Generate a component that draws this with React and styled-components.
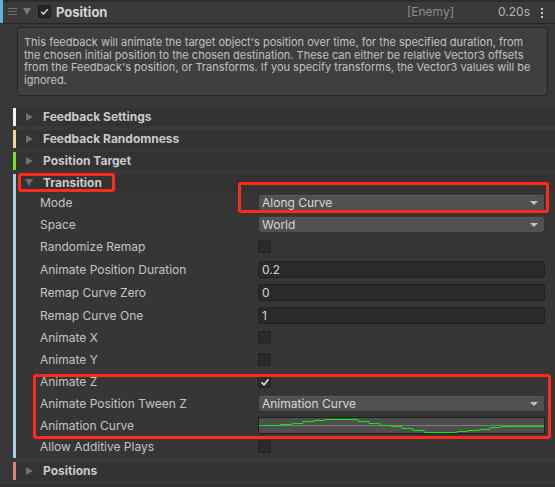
import React from "react";
import styled, { createGlobalStyle } from "styled-components";

const GlobalStyle = createGlobalStyle`
  html, body {
    margin: 0;
    padding: 0;
    background: #383838;
  }
  body {
    font-family: Inter, "Noto Sans", "Liberation Sans", sans-serif;
  }
`;

const Panel = styled.div`
  position: relative;
  width: 555px;
  height: 487px;
  overflow: hidden;
  background: #383838;
  color: #c4c4c4;
  font-size: 12px;
`;

const TopBar = styled.div`
  display: flex;
  align-items: center;
  height: 23px;
  background: #3a3a3a;
  border-bottom: 1px solid #262626;
  box-shadow: inset 0 2px 0 #2c2c2c;
  padding-right: 12px;
`;

const Stripe = styled.div`
  align-self: stretch;
  width: 3px;
  flex: none;
  background: ${(p) => p.color};
`;

const Hamburger = styled.div`
  margin-left: 5px;
  width: 9px;
  height: 7px;
  display: flex;
  flex-direction: column;
  justify-content: space-between;
  span {
    display: block;
    height: 1px;
    background: #6e6e6e;
  }
`;

const Arrow = styled.div`
  flex: none;
  width: 0;
  height: 0;
  margin-left: ${(p) => p.gap}px;
  ${(p) =>
    p.open
      ? `border-left: 4px solid transparent;
         border-right: 4px solid transparent;
         border-top: 7px solid ${p.color || "#6f6f6f"};`
      : `border-top: 4px solid transparent;
         border-bottom: 4px solid transparent;
         border-left: 7px solid ${p.color || "#6f6f6f"};`}
`;

const TitleCheck = styled.div`
  margin-left: 7px;
  width: 11px;
  height: 11px;
  border: 1px solid #191919;
  border-radius: 2px;
  background: #262626;
  display: flex;
  align-items: center;
  justify-content: center;
`;

const Title = styled.div`
  margin-left: 5px;
  font-weight: 700;
  font-size: 13px;
  color: #d4d4d4;
  flex: 1;
`;

const Target = styled.div`
  color: #8c8c8c;
  margin-right: 44px;
`;

const Duration = styled.div`
  color: #b4b4b4;
  margin-right: 11px;
`;

const Kebab = styled.div`
  display: flex;
  flex-direction: column;
  gap: 2px;
  margin-top: 3px;
  span {
    width: 2px;
    height: 2px;
    background: #c4c4c4;
  }
`;

const HelpBox = styled.div`
  margin: 3px 7px 0 17px;
  padding: 8px 6px 8px 6px;
  background: #3f3f3f;
  border: 1px solid #262626;
  border-radius: 3px;
  font-size: 11px;
  line-height: 12.7px;
  color: #c2c2c2;
  span {
    display: block;
    white-space: nowrap;
  }
`;

const Sections = styled.div`
  margin-top: 12px;
  padding-left: 13px;
`;

const SectionHeader = styled.div`
  display: flex;
  align-items: center;
  height: 18px;
  margin-bottom: ${(p) => (p.inGroup ? 0 : 4)}px;
  background: #333333;
`;

const SectionTitle = styled.div`
  margin-left: 10px;
  font-weight: 700;
  font-size: 12px;
  color: #cacaca;
`;

const Group = styled.div`
  border-left: 3px solid ${(p) => p.color};
  margin-bottom: 4px;
  background: #363636;
`;

const Row = styled.div`
  display: flex;
  align-items: center;
  height: ${(p) => p.h || 22}px;
  padding-right: 10px;
`;

const Label = styled.div`
  width: 218px;
  padding-left: 24px;
  flex: none;
  color: #c4c4c4;
`;

const Dropdown = styled.div`
  flex: 1;
  height: 16px;
  box-sizing: border-box;
  display: flex;
  align-items: center;
  justify-content: space-between;
  padding: 0 6px 0 3px;
  background: #515151;
  border: 1px solid #303030;
  border-top-color: #5a5a5a;
  border-radius: 3px;
  color: #d6d6d6;
`;

const DropArrow = styled.div`
  width: 0;
  height: 0;
  border-left: 4px solid transparent;
  border-right: 4px solid transparent;
  border-top: 4px solid #c4c4c4;
`;

const TextField = styled.div`
  flex: 1;
  height: 17px;
  box-sizing: border-box;
  display: flex;
  align-items: center;
  padding-left: 3px;
  background: #2a2a2a;
  border: 1px solid #212121;
  border-radius: 3px;
  color: #d4d4d4;
`;

const Check = styled.div`
  width: 13px;
  height: 13px;
  box-sizing: border-box;
  background: #2b2b2b;
  border: 1px solid #222;
  border-radius: 2px;
  display: flex;
  align-items: center;
  justify-content: center;
`;

const CurveBox = styled.div`
  flex: 1;
  height: 17px;
  box-sizing: border-box;
  background: #4f4f4f;
  border: 1px solid #1e1e1e;
  svg {
    display: block;
  }
`;

const Bottom = styled.div`
  height: 20px;
  background: #313131;
`;

const Annotation = styled.div`
  position: absolute;
  box-sizing: border-box;
  border: 3px solid #ff2a1c;
  border-radius: 3px;
  pointer-events: none;
`;

const Tick = ({ size = 9 }) => (
  <svg width={size} height={size} viewBox="0 0 10 10">
    <path d="M1.5 5.3 L4 7.8 L8.6 2.3" fill="none" stroke="#e6e6e6" strokeWidth="1.5" />
  </svg>
);

const keys = [
  [0, 0],
  [87, 1],
  [132, 0],
  [176, -1],
  [269, 0],
  [285, 0],
];

const curveAt = (x) => {
  for (let i = 0; i < keys.length - 1; i++) {
    const [x0, y0] = keys[i];
    const [x1, y1] = keys[i + 1];
    if (x >= x0 && x <= x1) {
      const t = (x - x0) / (x1 - x0);
      const s = (1 - Math.cos(Math.PI * t)) / 2;
      return y0 + (y1 - y0) * s;
    }
  }
  return 0;
};

const CurvePreview = () => {
  const w = 285;
  const mid = 7.5;
  let d = "";
  const step = 11;
  for (let x = 0; x < w; x += step) {
    const y = Math.round(mid - curveAt(Math.min(x + step / 2, w)) * 7) + 0.5;
    const x2 = Math.min(x + step, w);
    d += (x === 0 ? `M${x} ${y}` : ` L${x} ${y}`) + ` L${x2} ${y}`;
  }
  return (
    <svg width={w} height="15" viewBox={`0 0 ${w} 15`}>
      <line x1="0" y1="7.5" x2={w} y2="7.5" stroke="#7c7c7c" strokeWidth="1" />
      <path d={d} fill="none" stroke="#00f000" strokeWidth="1" />
    </svg>
  );
};

const headers = [
  { title: "Feedback Settings", color: "#f2f2f2" },
  { title: "Feedback Randomness", color: "#f1d58c" },
  { title: "Position Target", color: "#7ce312" },
];

export default function App() {
  return (
    <Panel>
      <GlobalStyle />
      <TopBar>
        <Stripe color="#5eb2da" />
        <Hamburger>
          <span />
          <span />
          <span />
        </Hamburger>
        <Arrow open gap={6} color="#7a7a7a" />
        <TitleCheck>
          <Tick />
        </TitleCheck>
        <Title>Position</Title>
        <Target>[Enemy]</Target>
        <Duration>0.20s</Duration>
        <Kebab>
          <span />
          <span />
          <span />
        </Kebab>
      </TopBar>

      <HelpBox>
        <span>This feedback will animate the target object's position over time, for the specified duration, from</span>
        <span>the chosen initial position to the chosen destination. These can either be relative Vector3 offsets</span>
        <span>from the Feedback's position, or Transforms. If you specify transforms, the Vector3 values will be</span>
        <span>ignored.</span>
      </HelpBox>

      <Sections>
        {headers.map((h) => (
          <SectionHeader key={h.title}>
            <Stripe color={h.color} />
            <Arrow gap={10} />
            <SectionTitle>{h.title}</SectionTitle>
          </SectionHeader>
        ))}

        <Group color="#a6d2e4">
          <SectionHeader inGroup>
            <Arrow open gap={9} />
            <SectionTitle>Transition</SectionTitle>
          </SectionHeader>
          <Row>
            <Label>Mode</Label>
            <Dropdown>
              Along Curve
              <DropArrow />
            </Dropdown>
          </Row>
          <Row>
            <Label>Space</Label>
            <Dropdown>
              World
              <DropArrow />
            </Dropdown>
          </Row>
          <Row>
            <Label>Randomize Remap</Label>
            <Check />
          </Row>
          <Row h={23}>
            <Label>Animate Position Duration</Label>
            <TextField>0.2</TextField>
          </Row>
          <Row h={23}>
            <Label>Remap Curve Zero</Label>
            <TextField>0</TextField>
          </Row>
          <Row h={23}>
            <Label>Remap Curve One</Label>
            <TextField>1</TextField>
          </Row>
          <Row>
            <Label>Animate X</Label>
            <Check />
          </Row>
          <Row>
            <Label>Animate Y</Label>
            <Check />
          </Row>
          <Row>
            <Label>Animate Z</Label>
            <Check>
              <Tick size={10} />
            </Check>
          </Row>
          <Row>
            <Label>Animate Position Tween Z</Label>
            <Dropdown>
              Animation Curve
              <DropArrow />
            </Dropdown>
          </Row>
          <Row h={21}>
            <Label>Animation Curve</Label>
            <CurveBox>
              <CurvePreview />
            </CurveBox>
          </Row>
          <Row>
            <Label>Allow Additive Plays</Label>
            <Check />
          </Row>
        </Group>

        <SectionHeader>
          <Stripe color="#e57a78" />
          <Arrow gap={10} />
          <SectionTitle>Positions</SectionTitle>
        </SectionHeader>
      </Sections>
      <Bottom />

      <Annotation style={{ left: 18, top: 173, width: 97, height: 19 }} />
      <Annotation style={{ left: 238, top: 182, width: 311, height: 31 }} />
      <Annotation style={{ left: 33, top: 374, width: 518, height: 65 }} />
    </Panel>
  );
}
